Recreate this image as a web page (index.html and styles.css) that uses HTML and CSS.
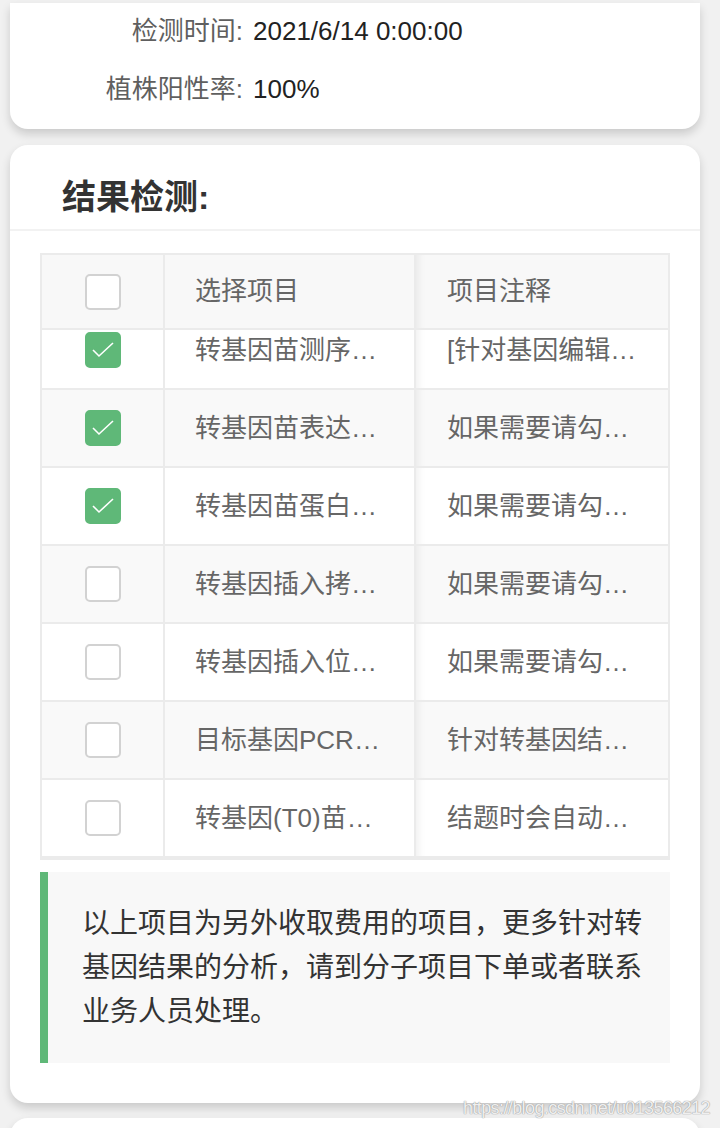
FILE: index.html
```html
<!DOCTYPE html>
<html lang="zh-CN">
<head>
    <meta charset="UTF-8">
    <meta name="viewport" content="width=device-width, initial-scale=1.0">
    <title>检测结果</title>
    <link rel="stylesheet" href="styles.css">
</head>
<body>
    <div class="page">
        <div class="card card-info">
            <div class="info-row">
                <span class="info-label">检测时间:</span>
                <span class="info-value">2021/6/14 0:00:00</span>
            </div>
            <div class="info-row">
                <span class="info-label">植株阳性率:</span>
                <span class="info-value">100%</span>
            </div>
        </div>

        <div class="card">
            <div class="card-header">结果检测:</div>
            <div class="card-body">
                <div class="table">
                    <div class="tr th">
                        <div class="td td-check"><span class="checkbox"></span></div>
                        <div class="td">选择项目</div>
                        <div class="td td-fixed">项目注释</div>
                    </div>
                    <div class="tbody">
                        <div class="tbody-inner">
                            <div class="tr">
                                <div class="td td-check"><span class="checkbox checked"><svg viewBox="0 0 36 36"><path d="M8 18 L14 24 L28 11"/></svg></span></div>
                                <div class="td">转基因苗测序分析</div>
                                <div class="td td-fixed">[针对基因编辑项目] 测序分析</div>
                            </div>
                            <div class="tr">
                                <div class="td td-check"><span class="checkbox checked"><svg viewBox="0 0 36 36"><path d="M8 18 L14 24 L28 11"/></svg></span></div>
                                <div class="td">转基因苗表达量检测</div>
                                <div class="td td-fixed">如果需要请勾选此项</div>
                            </div>
                            <div class="tr">
                                <div class="td td-check"><span class="checkbox checked"><svg viewBox="0 0 36 36"><path d="M8 18 L14 24 L28 11"/></svg></span></div>
                                <div class="td">转基因苗蛋白检测</div>
                                <div class="td td-fixed">如果需要请勾选此项</div>
                            </div>
                            <div class="tr">
                                <div class="td td-check"><span class="checkbox"></span></div>
                                <div class="td">转基因插入拷贝数检测</div>
                                <div class="td td-fixed">如果需要请勾选此项</div>
                            </div>
                            <div class="tr">
                                <div class="td td-check"><span class="checkbox"></span></div>
                                <div class="td">转基因插入位点检测</div>
                                <div class="td td-fixed">如果需要请勾选此项</div>
                            </div>
                            <div class="tr">
                                <div class="td td-check"><span class="checkbox"></span></div>
                                <div class="td">目标基因PCR检测</div>
                                <div class="td td-fixed">针对转基因结果进行检测</div>
                            </div>
                            <div class="tr">
                                <div class="td td-check"><span class="checkbox"></span></div>
                                <div class="td">转基因(T0)苗阳性检测</div>
                                <div class="td td-fixed">结题时会自动进行检测</div>
                            </div>
                        </div>
                    </div>
                </div>

                <div class="quote">以上项目为另外收取费用的项目，更多针对转基因结果的分析，请到分子项目下单或者联系业务人员处理。</div>
            </div>
        </div>

        <div class="card card-next"></div>

        <div class="watermark">https://blog.csdn.net/u013566212</div>
    </div>
</body>
</html>
```

FILE: styles.css
```css
body {
    margin: 0;
    background-color: #f1f1f1;
    font-family: "Liberation Sans", "Noto Sans CJK SC", sans-serif;
    color: #333;
}

.page {
    position: relative;
    padding-top: 3px;
    height: 1125px;
    overflow: hidden;
}

.card {
    background-color: #fff;
    margin: 0 20px 0 10px;
    border-radius: 18px;
    box-shadow: 0 5px 10px rgba(0, 0, 0, 0.16);
}

/* first card is scrolled, its top edge is off screen */
.card-info {
    border-radius: 0 0 18px 18px;
    padding: 6px 0 18px;
}

.info-row {
    display: flex;
    font-size: 26px;
    line-height: 44px;
}

.info-row + .info-row {
    margin-top: 14px;
}

.info-label {
    width: 233px;
    text-align: right;
    color: #5f5f5f;
}

.info-value {
    margin-left: 10px;
    color: #222;
}

.card + .card {
    margin-top: 16px;
}

.card-header {
    padding: 20px 0 0 52px;
    height: 64px;
    line-height: 64px;
    font-size: 34px;
    font-weight: bold;
    color: #333;
    border-bottom: 2px solid #f2f2f2;
}

.card-body {
    padding: 22px 30px 40px;
}

.table {
    border: 2px solid #ebebeb;
}

.tr {
    display: grid;
    grid-template-columns: 121px 251px 1fr;
    height: 76px;
    border-bottom: 2px solid #ebebeb;
    background-color: #fff;
}

.tr.th {
    height: 73px;
    background-color: #f8f8f8;
}

.tbody {
    overflow: hidden;
}

/* body scrolled a little under the header */
.tbody-inner {
    margin-top: -18px;
}

.tbody-inner .tr:nth-child(even) {
    background-color: #f9f9f9;
}

.td {
    font-size: 26px;
    color: #666;
    white-space: nowrap;
    overflow: hidden;
    text-overflow: ellipsis;
    padding: 0 24px 0 30px;
    border-left: 2px solid #ebebeb;
    display: block;
    line-height: 76px;
}

.th .td {
    line-height: 73px;
}

.td-check {
    border-left: none;
    padding: 0;
    display: flex;
    align-items: center;
    justify-content: center;
}

.td-fixed {
    padding: 0 25px 0 31px;
    box-shadow: inset 10px 0 8px -8px rgba(0, 0, 0, 0.07);
}

.checkbox {
    box-sizing: border-box;
    width: 36px;
    height: 36px;
    border: 2px solid #d2d2d2;
    border-radius: 5px;
    background-color: #fff;
    display: block;
}

.checkbox.checked {
    border-color: #5fb878;
    background-color: #5fb878;
}

.checkbox svg {
    display: block;
    width: 36px;
    height: 36px;
    margin: -2px;
}

.checkbox path {
    fill: none;
    stroke: #fff;
    stroke-width: 1.6;
}

.quote {
    margin-top: 12px;
    border-left: 8px solid #5fb878;
    background-color: #f8f8f8;
    padding: 30px 20px 29px 34px;
    font-size: 28px;
    line-height: 44px;
    color: #333;
}

.card-next {
    margin-top: 15px !important;
    height: 40px;
}

.watermark {
    position: absolute;
    top: 1098px;
    right: 10px;
    font-size: 18px;
    letter-spacing: -0.6px;
    color: rgba(255, 255, 255, 0.85);
    text-shadow: 0 0 1px #999, 0 0 1px #999;
}
```
